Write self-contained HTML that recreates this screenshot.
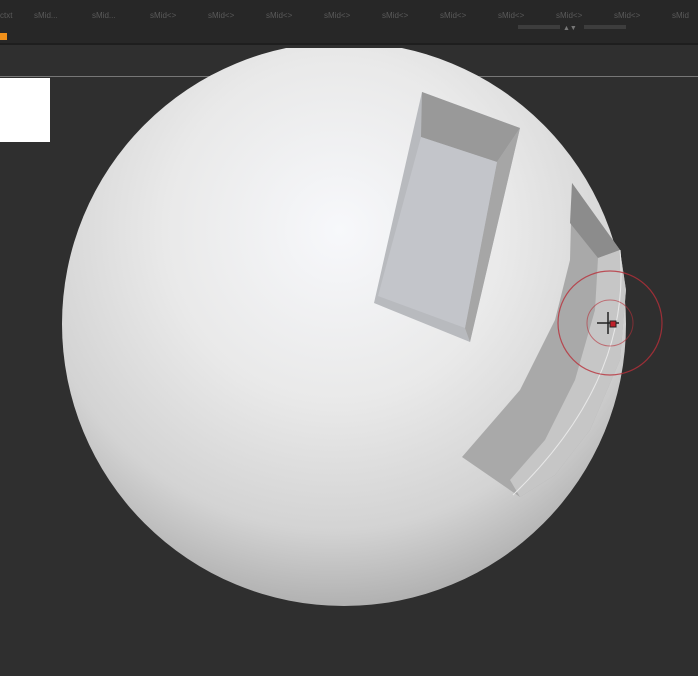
<!DOCTYPE html>
<html><head><style>
html,body{margin:0;padding:0;width:698px;height:676px;overflow:hidden;background:#2f2f2f;font-family:"Liberation Sans",sans-serif}
</style></head><body>
<svg width="698" height="676" viewBox="0 0 698 676" xmlns="http://www.w3.org/2000/svg">
<defs>
<radialGradient id="sg" cx="330" cy="230" r="430" fx="340" fy="230" gradientUnits="userSpaceOnUse">
<stop offset="0" stop-color="#f7f8fb"/>
<stop offset="0.4" stop-color="#e9e9e9"/>
<stop offset="0.7" stop-color="#d3d3d3"/>
<stop offset="0.88" stop-color="#b0b0b0"/>
<stop offset="1" stop-color="#8a8a8a"/>
</radialGradient>
<clipPath id="cp"><rect x="0" y="48" width="698" height="628"/></clipPath>
</defs>
<rect x="0" y="0" width="698" height="44" fill="#272727"/>
<rect x="0" y="43" width="698" height="2" fill="#1e1e1e"/>
<g font-size="8" fill="#5a5a5a">
<text x="0" y="18">ctxt</text><text x="34" y="18">sMid...</text><text x="92" y="18">sMid...</text><text x="150" y="18">sMid&lt;&gt;</text><text x="208" y="18">sMid&lt;&gt;</text><text x="266" y="18">sMid&lt;&gt;</text><text x="324" y="18">sMid&lt;&gt;</text><text x="382" y="18">sMid&lt;&gt;</text><text x="440" y="18">sMid&lt;&gt;</text><text x="498" y="18">sMid&lt;&gt;</text><text x="556" y="18">sMid&lt;&gt;</text><text x="614" y="18">sMid&lt;&gt;</text><text x="672" y="18">sMid</text>
</g>
<rect x="518" y="25" width="42" height="4" fill="#3d3d3d"/><rect x="584" y="25" width="42" height="4" fill="#3d3d3d"/>
<text x="563" y="30" font-size="7" fill="#777">▲▼</text>
<rect x="0" y="33" width="7" height="7" fill="#f0901a"/>
<rect x="0" y="76" width="698" height="1" fill="#777"/>
<rect x="0" y="78" width="50" height="64" fill="#ffffff"/>
<g clip-path="url(#cp)">
<circle cx="344" cy="324" r="282" fill="url(#sg)"/>
</g>
<!-- cut 1 -->
<polygon points="422,92 520,128 470,342 374,303" fill="#b8babe"/>
<polygon points="422,92 520,128 497,162 421,137" fill="#999"/>
<polygon points="520,128 470,342 465,328 497,162" fill="#a6a6a6"/>
<polygon points="421,137 497,162 465,328 378,296" fill="#c3c5ca"/>
<!-- cut 2 -->
<polygon points="572,183 620,250 626,290 620,360 590,430 555,475 520,497 462,457 520,390 555,320 570,260" fill="#a9a9a9"/>
<polygon points="572,183 620,250 598,258 570,223" fill="#8c8c8c"/>
<polygon points="598,258 620,250 626,290 620,360 590,430 555,475 520,497 510,480 545,440 575,380 595,310" fill="#c6c6c6"/>
<path d="M620,250 Q632,380 513,495" stroke="#e8e8e8" stroke-width="1" fill="none"/>
<circle cx="610" cy="323" r="52" fill="none" stroke="#b8303a" stroke-width="1.2" opacity="0.8"/>
<circle cx="610" cy="323" r="23" fill="none" stroke="#b8303a" stroke-width="1" opacity="0.6"/>
<path d="M608,312 V334 M597,323 H619" stroke="#222" stroke-width="1.5"/>
<rect x="610" y="321" width="6" height="6" fill="#c0202a" stroke="#222" stroke-width="1"/>
</svg>
</body></html>
